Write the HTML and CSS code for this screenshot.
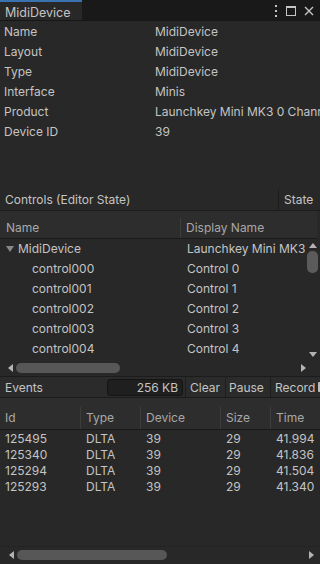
FILE: index.html
```html
<!DOCTYPE html>
<html lang="en">
  <head>
    <meta charset="UTF-8" />
    <title>MidiDevice</title>
    <link rel="stylesheet" href="styles.css">
  </head>
  <body>
    <header class="tabbar">
      <div class="tab">MidiDevice</div>
      <div class="tab-tools">
        <svg width="4" height="12" viewBox="0 0 4 12"><rect x="1" y="0" width="2" height="2" fill="#c4c4c4"/><rect x="1" y="5" width="2" height="2" fill="#c4c4c4"/><rect x="1" y="10" width="2" height="2" fill="#c4c4c4"/></svg>
        <svg width="10" height="10" viewBox="0 0 10 10"><rect x="0.5" y="0.5" width="9" height="9" fill="none" stroke="#c4c4c4"/><rect x="0" y="0" width="10" height="2" fill="#c4c4c4"/></svg>
        <svg width="10" height="10" viewBox="0 0 10 10"><path d="M1 1 L9 9 M9 1 L1 9" stroke="#c4c4c4" stroke-width="1.4"/></svg>
      </div>
    </header>

    <section class="info">
      <div class="info-row"><span class="info-key">Name</span><span>MidiDevice</span></div>
      <div class="info-row"><span class="info-key">Layout</span><span>MidiDevice</span></div>
      <div class="info-row"><span class="info-key">Type</span><span>MidiDevice</span></div>
      <div class="info-row"><span class="info-key">Interface</span><span>Minis</span></div>
      <div class="info-row"><span class="info-key">Product</span><span class="info-val">Launchkey Mini MK3 0 Channel 0</span></div>
      <div class="info-row"><span class="info-key">Device ID</span><span>39</span></div>
    </section>

    <section class="controls">
      <div class="controls-head">
        <span class="controls-title">Controls (Editor State)</span>
        <span class="controls-state">State</span>
      </div>
      <div class="col-head">
        <span class="col-name">Name</span>
        <span class="col-display">Display Name</span>
      </div>
      <div class="tree-wrap">
        <div class="tree">
          <div class="tree-row"><span class="tree-name root"><i class="fold"></i>MidiDevice</span><span class="tree-disp">Launchkey Mini MK3 0 Channel 0</span></div>
          <div class="tree-row"><span class="tree-name child">control000</span><span class="tree-disp">Control 0</span></div>
          <div class="tree-row"><span class="tree-name child">control001</span><span class="tree-disp">Control 1</span></div>
          <div class="tree-row"><span class="tree-name child">control002</span><span class="tree-disp">Control 2</span></div>
          <div class="tree-row"><span class="tree-name child">control003</span><span class="tree-disp">Control 3</span></div>
          <div class="tree-row"><span class="tree-name child">control004</span><span class="tree-disp">Control 4</span></div>
        </div>
        <div class="vscroll">
          <i class="arrow up"></i>
          <div class="vtrack"><div class="vthumb"></div></div>
          <i class="arrow down"></i>
        </div>
      </div>
      <div class="hscroll">
        <i class="arrow left"></i>
        <div class="htrack"><div class="hthumb thumb-a"></div></div>
        <i class="arrow right"></i>
      </div>
    </section>

    <section class="events">
      <div class="toolbar">
        <span class="tb-label">Events</span>
        <span class="tb-field">256 KB</span>
        <span class="tb-btn btn-clear">Clear</span>
        <span class="tb-btn btn-pause">Pause</span>
        <span class="tb-btn btn-record">Record <i class="toggle"></i></span>
      </div>
      <div class="ev-head">
        <span class="c-id">Id</span>
        <span class="c-type">Type</span>
        <span class="c-dev">Device</span>
        <span class="c-size">Size</span>
        <span class="c-time">Time</span>
      </div>
      <div class="ev-body">
        <div class="ev-row"><span class="c-id">125495</span><span class="c-type">DLTA</span><span class="c-dev">39</span><span class="c-size">29</span><span class="c-time">41.994</span></div>
        <div class="ev-row"><span class="c-id">125340</span><span class="c-type">DLTA</span><span class="c-dev">39</span><span class="c-size">29</span><span class="c-time">41.836</span></div>
        <div class="ev-row"><span class="c-id">125294</span><span class="c-type">DLTA</span><span class="c-dev">39</span><span class="c-size">29</span><span class="c-time">41.504</span></div>
        <div class="ev-row"><span class="c-id">125293</span><span class="c-type">DLTA</span><span class="c-dev">39</span><span class="c-size">29</span><span class="c-time">41.340</span></div>
      </div>
      <div class="hscroll bottom">
        <i class="arrow left"></i>
        <div class="htrack"><div class="hthumb thumb-b"></div></div>
        <i class="arrow right"></i>
      </div>
    </section>
  </body>
</html>
```
FILE: styles.css
```css
*,
*::after,
*::before {
  box-sizing: border-box;
}

body {
  margin: 0;
  width: 320px;
  height: 564px;
  overflow: hidden;
  background-color: #282828;
  color: #c4c4c4;
  font-family: Inter, "Noto Sans", sans-serif;
  font-size: 12px;
  display: flex;
  flex-direction: column;
}

/* barra de pestañas */
.tabbar {
  height: 21px;
  display: flex;
  align-items: stretch;
  background-color: #191919;
  border-bottom: 1px solid #171717;
}
.tab {
  width: 82px;
  padding: 2px 0 0 5px;
  line-height: 17px;
  background-color: #282828;
  border-top: 2px solid #3a72b0;
  font-size: 12.5px;
}
.tab-tools {
  margin-left: auto;
  display: flex;
  align-items: center;
  gap: 8px;
  padding: 1px 6px 0 0;
}

/* propiedades del dispositivo */
.info {
  padding-top: 1px;
}
.info-row {
  height: 20px;
  line-height: 20px;
  display: flex;
  white-space: nowrap;
  overflow: hidden;
}
.info-key {
  width: 155px;
  flex: none;
  padding-left: 4px;
}
.info-val {
  overflow: hidden;
}

/* controles */
.controls {
  margin-top: 47px;
}
.controls-head {
  height: 22px;
  display: flex;
  align-items: center;
  border-bottom: 1px solid #1c1c1c;
}
.controls-title {
  width: 279px;
  padding-left: 5px;
  line-height: 21px;
  border-right: 1px solid #1c1c1c;
}
.controls-state {
  padding-left: 5px;
}
.col-head {
  height: 28px;
  display: flex;
  align-items: flex-end;
  margin-right: 3px;
  background-color: #2d2d2d;
  border-bottom: 1px solid #1a1a1a;
  color: #a8a8a8;
}
.col-name {
  width: 181px;
  padding-left: 6px;
  border-right: 1px solid #3d3d3d;
  line-height: 20px;
}
.col-display {
  padding-left: 5px;
  line-height: 20px;
}
.tree-wrap {
  height: 121px;
  display: flex;
}
.tree {
  flex: 1;
  overflow: hidden;
}
.tree-row {
  height: 20px;
  line-height: 20px;
  display: flex;
  white-space: nowrap;
}
.tree-name {
  width: 187px;
  flex: none;
}
.tree-name.root {
  padding-left: 6px;
  display: flex;
  align-items: center;
}
.tree-name.child {
  padding-left: 32px;
}
.tree-disp {
  overflow: hidden;
}
.fold {
  width: 0;
  height: 0;
  margin-right: 4px;
  border-left: 4px solid transparent;
  border-right: 4px solid transparent;
  border-top: 6px solid #888;
}

/* barras de desplazamiento */
.vscroll {
  width: 15px;
  flex: none;
  display: flex;
  flex-direction: column;
  align-items: center;
  padding: 4px 0 3px;
}
.vtrack {
  flex: 1;
  width: 100%;
  padding: 3px 2px;
}
.vthumb {
  height: 22px;
  border-radius: 5px;
  background-color: #5b5b5b;
}
.hscroll {
  height: 16px;
  display: flex;
  align-items: center;
  padding: 0 14px 0 8px;
}
.htrack {
  flex: 1;
  padding: 0 3px;
}
.hthumb {
  height: 10px;
  border-radius: 5px;
  background-color: #575757;
}
.thumb-a {
  width: 104px;
}
.thumb-b {
  width: 150px;
}
.arrow {
  width: 0;
  height: 0;
  flex: none;
}
.arrow.up {
  border-left: 4px solid transparent;
  border-right: 4px solid transparent;
  border-bottom: 5px solid #b4b4b4;
}
.arrow.down {
  border-left: 4px solid transparent;
  border-right: 4px solid transparent;
  border-top: 5px solid #b4b4b4;
}
.arrow.left {
  border-top: 4px solid transparent;
  border-bottom: 4px solid transparent;
  border-right: 5px solid #b4b4b4;
}
.arrow.right {
  border-top: 4px solid transparent;
  border-bottom: 4px solid transparent;
  border-left: 5px solid #b4b4b4;
}

/* eventos */
.events {
  flex: 1;
  display: flex;
  flex-direction: column;
  border-top: 1px solid #1c1c1c;
}
.toolbar {
  height: 21px;
  display: flex;
  align-items: center;
  white-space: nowrap;
  overflow: hidden;
  background-color: #2b2b2b;
  border-bottom: 1px solid #1c1c1c;
}
.tb-label {
  width: 107px;
  flex: none;
  padding-left: 5px;
}
.tb-field {
  width: 76px;
  flex: none;
  height: 17px;
  line-height: 16px;
  text-align: right;
  padding-right: 4px;
  background-color: #1f1f1f;
  border: 1px solid #141414;
  border-radius: 3px;
}
.tb-btn {
  flex: none;
  height: 21px;
  line-height: 21px;
  padding-left: 4px;
  border-left: 1px solid #1e1e1e;
}
.btn-clear {
  margin-left: 2px;
  width: 40px;
}
.btn-pause {
  width: 45px;
  padding-left: 3px;
}
.btn-record {
  display: flex;
  align-items: center;
  gap: 3px;
}
.toggle {
  width: 8px;
  height: 10px;
  background-color: #bdbdbd;
  border-radius: 1px;
}
.ev-head {
  height: 32px;
  display: flex;
  align-items: flex-end;
  background-color: #2d2d2d;
  border-bottom: 1px solid #1a1a1a;
  color: #a8a8a8;
  white-space: nowrap;
}
.ev-head span {
  line-height: 22px;
  border-right: 1px solid #3d3d3d;
}
.ev-head .c-time {
  border-right: none;
}
.ev-body {
  flex: 1;
  padding-top: 1px;
}
.ev-row {
  height: 16px;
  line-height: 16px;
  display: flex;
  white-space: nowrap;
}
.c-id,
.c-type,
.c-dev,
.c-size,
.c-time {
  flex: none;
  padding-left: 5px;
}
.c-id {
  width: 81px;
}
.c-type {
  width: 60px;
}
.c-dev {
  width: 80px;
}
.c-size {
  width: 50px;
}
.hscroll.bottom {
  padding: 0 6px 0 9px;
  margin-bottom: 2px;
  border-top: 1px solid #242424;
}
```
